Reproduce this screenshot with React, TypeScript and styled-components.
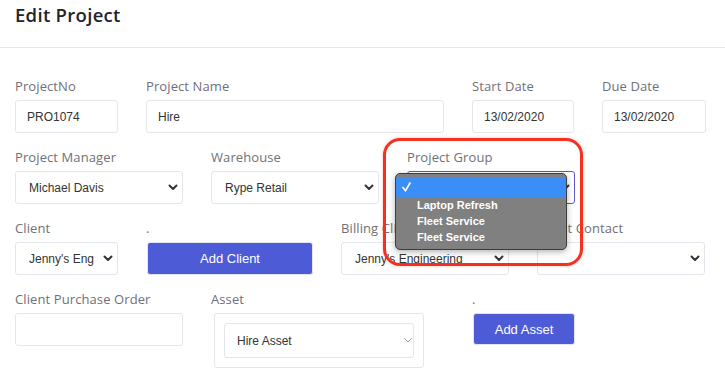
import React from 'react';
import styled, {createGlobalStyle} from 'styled-components';

const GlobalStyle = createGlobalStyle`
  body {
    margin: 0;
    background: #ffffff;
    font-family: "Open Sans", "Liberation Sans", sans-serif;
  }
`

const Chevron = ({thin}: { thin?: boolean }) => (
    <svg width="10" height="7" viewBox="0 0 10 7">
        <path d="M1.5 1.5 L5 5 L8.5 1.5" fill="none"
              stroke={thin ? '#9a9aa2' : '#333'} strokeWidth={thin ? 1 : 2}
              strokeLinecap="round" strokeLinejoin="round"/>
    </svg>
)

const CheckMark = () => (
    <svg width="9" height="10" viewBox="0 0 9 10">
        <path d="M1 5.5 L3.4 8.8 L8 1" fill="none" stroke="#fff" strokeWidth="1.6"
              strokeLinecap="round" strokeLinejoin="round"/>
    </svg>
)

export default function App() {
    return (
        <Page>
            <GlobalStyle/>
            <Header>
                <Title>Edit Project</Title>
            </Header>
            <Form>
                <Row $cols="103px 298px 102px 104px">
                    <Field>
                        <Label>ProjectNo</Label>
                        <Input>PRO1074</Input>
                    </Field>
                    <Field>
                        <Label>Project Name</Label>
                        <Input>Hire</Input>
                    </Field>
                    <Field>
                        <Label>Start Date</Label>
                        <Input>13/02/2020</Input>
                    </Field>
                    <Field>
                        <Label>Due Date</Label>
                        <Input>13/02/2020</Input>
                    </Field>
                </Row>

                <Row $cols="168px 168px 168px">
                    <Field>
                        <Label>Project Manager</Label>
                        <Select>
                            <SelectText>Michael Davis</SelectText>
                            <Chevron/>
                        </Select>
                    </Field>
                    <Field>
                        <Label>Warehouse</Label>
                        <Select>
                            <SelectText>Rype Retail</SelectText>
                            <Chevron/>
                        </Select>
                    </Field>
                    <Field>
                        <Label>Project Group</Label>
                        <Select $focused>
                            <SelectText></SelectText>
                            <Chevron/>
                        </Select>
                        <Highlight/>
                        <Menu>
                            <MenuItem $active>
                                <Check><CheckMark/></Check>
                            </MenuItem>
                            <MenuItem>Laptop Refresh</MenuItem>
                            <MenuItem>Fleet Service</MenuItem>
                            <MenuItem>Fleet Service</MenuItem>
                        </Menu>
                    </Field>
                </Row>

                <Row $cols="103px 167px 168px 168px">
                    <Field>
                        <Label>Client</Label>
                        <Select>
                            <SelectText>Jenny's Eng</SelectText>
                            <Chevron/>
                        </Select>
                    </Field>
                    <Field>
                        <Label>.</Label>
                        <Button>Add Client</Button>
                    </Field>
                    <Field>
                        <Label>Billing Client</Label>
                        <Select>
                            <SelectText>Jenny's Engineering</SelectText>
                            <Chevron/>
                        </Select>
                    </Field>
                    <Field>
                        <Label>Client Contact</Label>
                        <Select>
                            <SelectText></SelectText>
                            <Chevron/>
                        </Select>
                    </Field>
                </Row>

                <Row $cols="168px 233px 103px">
                    <Field>
                        <Label>Client Purchase Order</Label>
                        <Input></Input>
                    </Field>
                    <Field>
                        <Label>Asset</Label>
                        <AssetBox>
                            <AssetSelect>
                                <SelectText>Hire Asset</SelectText>
                                <Chevron thin/>
                            </AssetSelect>
                        </AssetBox>
                    </Field>
                    <Field>
                        <Label>.</Label>
                        <Button $small>Add Asset</Button>
                    </Field>
                </Row>
            </Form>
        </Page>
    );
}

const Page = styled.div`
  width: 725px;
  height: 377px;
  overflow: hidden;
  background: #fff;
`

const Header = styled.div`
  height: 48px;
  padding: 3px 15px 0;
  box-sizing: border-box;
  border-bottom: 1px solid #e7e7ef;
`

const Title = styled.h1`
  margin: 0;
  font-family: "Open Sans", sans-serif;
  font-size: 18.5px;
  line-height: 24px;
  font-weight: 600;
  letter-spacing: 0.3px;
  color: #23232b;
`

const Form = styled.div`
  padding: 28px 15px 0;
  display: flex;
  flex-direction: column;
  gap: 14px;
`

const Row = styled.div<{ $cols: string }>`
  display: grid;
  grid-template-columns: ${p => p.$cols};
  column-gap: 28px;
  align-items: start;
`

const Field = styled.div`
  position: relative;
  display: flex;
  flex-direction: column;
  gap: 4px;
`

const Label = styled.label`
  font-family: "Open Sans", sans-serif;
  font-size: 13px;
  line-height: 20px;
  letter-spacing: 0.1px;
  color: #707078;
  white-space: nowrap;
`

const Input = styled.div`
  height: 33px;
  box-sizing: border-box;
  border: 1px solid #e5e5ee;
  border-radius: 3px;
  padding: 0 11px;
  display: flex;
  align-items: center;
  font-family: "Liberation Sans", Arial, sans-serif;
  font-size: 12px;
  color: #333;
`

const Select = styled.div<{ $focused?: boolean }>`
  height: 33px;
  box-sizing: border-box;
  border: 1px solid ${p => p.$focused ? '#5b55c9' : '#e5e5ee'};
  border-radius: 3px;
  padding: 0 4px 0 13px;
  display: flex;
  align-items: center;
  justify-content: space-between;
  gap: 6px;
  background: #fff;
`

const SelectText = styled.span`
  font-family: "Liberation Sans", Arial, sans-serif;
  font-size: 12px;
  color: #333;
  white-space: nowrap;
  overflow: hidden;
`

const AssetBox = styled.div`
  margin-left: 3px;
  width: 210px;
  box-sizing: border-box;
  border: 1px solid #e5e5ee;
  border-radius: 3px;
  padding: 9px;
`

const AssetSelect = styled(Select)`
  height: 35px;
  padding: 0 0 0 12px;
`

const Button = styled.button<{ $small?: boolean }>`
  height: ${p => p.$small ? '32px' : '33px'};
  margin-left: 1px;
  border: 1px solid #e2e3f5;
  border-radius: 3px;
  background: #4e5bd6;
  color: #fff;
  font-family: "Liberation Sans", Arial, sans-serif;
  font-size: 13px;
  cursor: pointer;
`

const Highlight = styled.div`
  position: absolute;
  left: -24px;
  top: -9px;
  width: 200px;
  height: 128px;
  box-sizing: border-box;
  border: 3px solid #f4301f;
  border-radius: 17px;
  box-shadow: 0 0 3px rgba(244, 48, 31, 0.35);
  z-index: 2;
  pointer-events: none;
`

const Menu = styled.div`
  position: absolute;
  left: -12px;
  top: 26px;
  width: 172px;
  box-sizing: border-box;
  padding: 4px 0;
  background: #808080;
  border: 1px solid #3e3e3e;
  border-radius: 5px;
  box-shadow: 0 2px 6px rgba(0, 0, 0, 0.3);
  z-index: 3;
`

const MenuItem = styled.div<{ $active?: boolean }>`
  position: relative;
  height: ${p => p.$active ? '19px' : '16px'};
  padding-left: 21px;
  display: flex;
  align-items: center;
  background: ${p => p.$active ? '#3b8ef7' : 'transparent'};
  font-family: "Liberation Sans", Arial, sans-serif;
  font-size: 11px;
  font-weight: 700;
  color: #fff;
`

const Check = styled.span`
  position: absolute;
  left: 6px;
  top: 4px;
  display: flex;
`
